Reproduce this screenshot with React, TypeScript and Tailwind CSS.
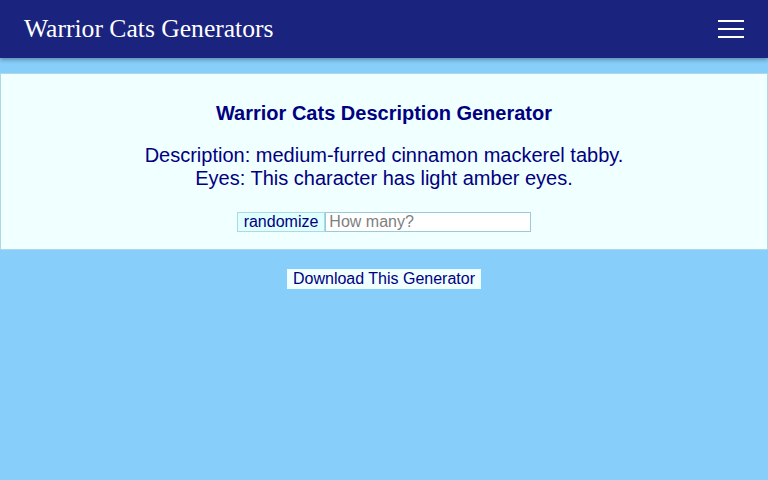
import { useState } from 'react';

export default function App() {
  const [count, setCount] = useState('');

  return (
    <div className="min-h-[480px] bg-[#87cefa] font-['Liberation_Sans',Arial,sans-serif] text-[#000080]">
      <header className="h-[58px] bg-[#1a237e] flex items-center justify-between px-6 shadow-[0_2px_4px_rgba(0,0,0,0.3)]">
        <div className="font-['Liberation_Serif','Times_New_Roman',serif] text-[25.6px] text-white leading-none">
          Warrior Cats Generators
        </div>
        <button className="flex flex-col gap-[6px] w-[26px]">
          <span className="block h-[2px] bg-white" />
          <span className="block h-[2px] bg-white" />
          <span className="block h-[2px] bg-white" />
        </button>
      </header>

      <main className="pt-[15px]">
        <section className="bg-[#f0ffff] border border-[#add8e6] flex flex-col items-center pt-[27px] pb-[17px]">
          <h1 className="text-[20px] font-bold leading-[24px]">Warrior Cats Description Generator</h1>
          <div className="mt-[19px] text-[20px] leading-[23px] text-center">
            <p>Description: medium-furred cinnamon mackerel tabby.</p>
            <p>Eyes: This character has light amber eyes.</p>
          </div>
          <div className="mt-[22px] flex">
            <button className="h-[20px] px-[6px] bg-[#e0ffff] border border-[#add8e6] text-[16px] leading-none text-[#000080]">
              randomize
            </button>
            <input
              value={count}
              onChange={(e) => setCount(e.target.value)}
              placeholder="How many?"
              className="h-[20px] w-[206px] px-[3px] bg-white border border-[#9cc9d6] text-[16px] leading-none placeholder:text-[#808080] outline-none"
            />
          </div>
        </section>

        <div className="flex justify-center mt-[19px]">
          <button className="h-[20px] px-[6px] bg-[#f0ffff] text-[16px] leading-none text-[#000080]">
            Download This Generator
          </button>
        </div>
      </main>
    </div>
  );
}
